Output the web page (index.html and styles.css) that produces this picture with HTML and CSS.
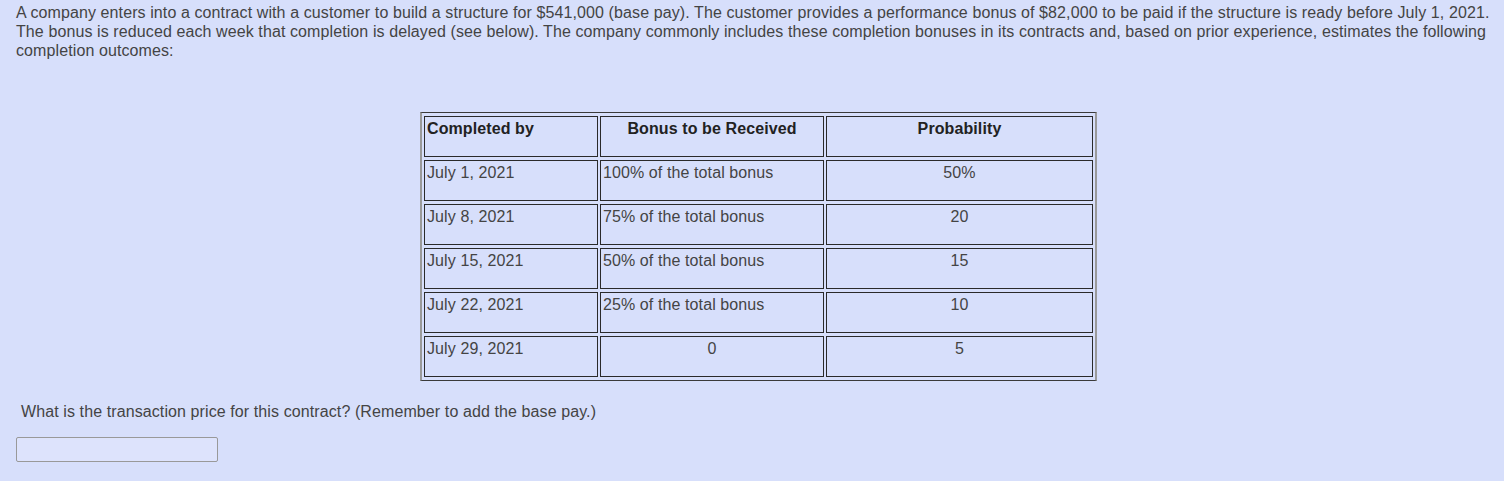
FILE: index.html
```html
<!DOCTYPE html>
<html>
<head>
<meta charset="utf-8">
<link rel="stylesheet" href="styles.css">
</head>
<body>
<div class="page">
  <p class="intro">A company enters into a contract with a customer to build a structure for $541,000 (base pay). The customer provides a performance bonus of $82,000 to be paid if the structure is ready before July 1, 2021. The bonus is reduced each week that completion is delayed (see below). The company commonly includes these completion bonuses in its contracts and, based on prior experience, estimates the following completion outcomes:</p>
  <div class="table-wrap">
    <table class="outcomes">
      <tr>
        <th class="c1 left">Completed by</th>
        <th class="c2">Bonus to be Received</th>
        <th class="c3">Probability</th>
      </tr>
      <tr><td class="c1">July 1, 2021</td><td class="c2 left">100% of the total bonus</td><td class="c3 center">50%</td></tr>
      <tr><td class="c1">July 8, 2021</td><td class="c2 left">75% of the total bonus</td><td class="c3 center">20</td></tr>
      <tr><td class="c1">July 15, 2021</td><td class="c2 left">50% of the total bonus</td><td class="c3 center">15</td></tr>
      <tr><td class="c1">July 22, 2021</td><td class="c2 left">25% of the total bonus</td><td class="c3 center">10</td></tr>
      <tr><td class="c1">July 29, 2021</td><td class="c2 center">0</td><td class="c3 center">5</td></tr>
    </table>
  </div>
  <p class="question">What is the transaction price for this contract? (Remember to add the base pay.)</p>
  <input class="answer" type="text">
</div>
</body>
</html>
```
FILE: styles.css
```css
html, body {
  margin: 0;
  padding: 0;
  background: #d7dffb;
}
body {
  font-family: "Liberation Sans", Arial, sans-serif;
  font-size: 16px;
  letter-spacing: 0.1px;
  color: #444;
}
.page {
  padding: 3px 10px 0 16px;
}
.intro {
  margin: 0;
  line-height: 19px;
}
.table-wrap {
  display: flex;
  justify-content: flex-start;
  padding: 52px 0 0 404px;
}
.outcomes {
  border-collapse: separate;
  border-spacing: 2px 3px;
  border-style: solid;
  border-width: 1px 2px 1px 2px;
  border-color: #3a3a3a #9a9a9a #3a3a3a #9a9a9a;
}
.outcomes th, .outcomes td {
  border: 1px solid #2a2a2a;
  height: 41px;
  padding: 3px 2px;
  vertical-align: top;
  font-size: 16px;
  line-height: 18px;
  text-align: left;
  box-sizing: border-box;
}
.outcomes th {
  font-weight: bold;
  color: #222;
  text-align: center;
}
.outcomes th.left { text-align: left; }
.outcomes td.center { text-align: center; }
.c1 { width: 174px; }
.c2 { width: 224px; }
.c3 { width: 267px; }
.question {
  margin: 21px 0 0 5px;
  line-height: 19px;
}
.answer {
  display: block;
  margin-top: 16px;
  width: 202px;
  height: 25px;
  box-sizing: border-box;
  border: 1px solid #999;
  border-radius: 2px;
  background: #dde3fc;
}
```
